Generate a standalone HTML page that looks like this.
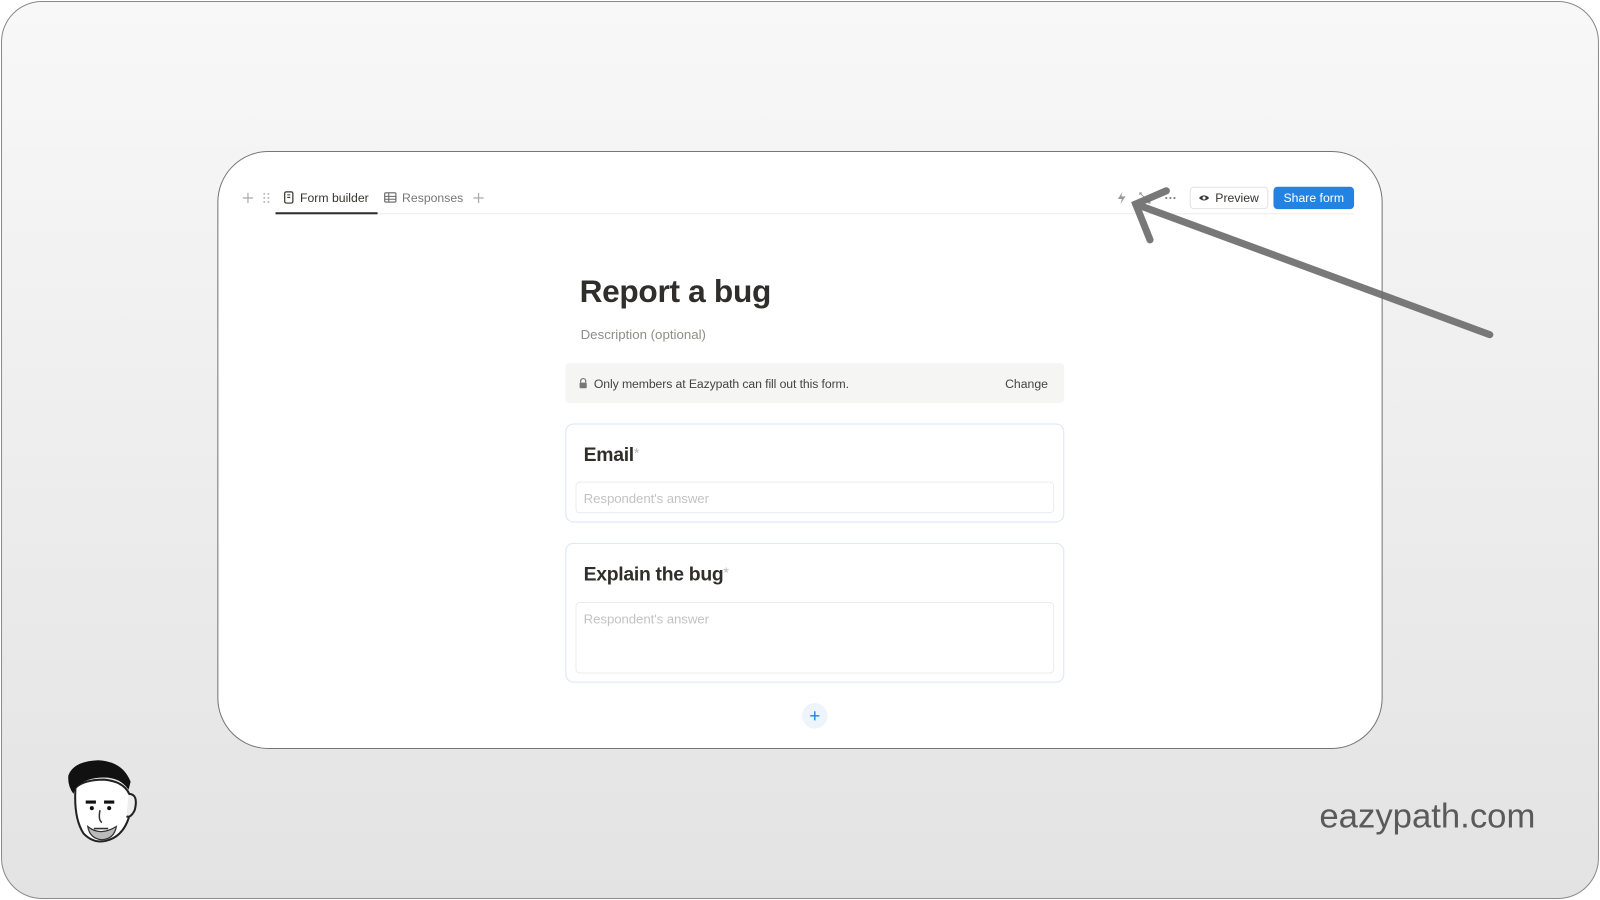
<!DOCTYPE html>
<html><head><meta charset="utf-8"><style>
*{box-sizing:border-box;margin:0;padding:0}
html,body{width:1600px;height:900px;overflow:hidden;background:#fff;font-family:"Liberation Sans",sans-serif}
#s{position:absolute;left:0;top:0;width:1568px;height:882px;transform:scale(1.0204);transform-origin:0 0}
.frame{position:absolute;left:1px;top:1px;width:1566px;height:880px;border:1px solid #8a8a8a;border-radius:40px;background:linear-gradient(#f8f8f8,#e3e3e3)}
.win{position:absolute;left:213px;top:148px;width:1142px;height:586px;background:#fff;border:1px solid #767676;border-radius:50px}
.a{position:absolute;white-space:nowrap}
.tab{font-size:12px;color:#37352f}
.card{position:absolute;left:554px;width:489px;border:1px solid #d9e6f6;border-radius:8px;background:#fff}
.inp{position:absolute;left:9px;right:9px;border:1px solid #ececec;border-radius:4px;font-size:13px;color:#c3c3c3;padding:8px 7px;letter-spacing:-0.1px}
.q{position:absolute;left:17px;font-size:19px;font-weight:bold;color:#2f2e2a;letter-spacing:-0.3px}
.q span{color:#bbb;font-weight:normal;font-size:14px;vertical-align:top}
</style></head><body><div id="s">
<div class="frame"></div>
<div class="win"></div>
<svg class="a" style="left:236px;top:186px" width="240" height="16" viewBox="0 0 240 16">
<path d="M2 8h10M7 3v10" stroke="#aaa" stroke-width="1.2"/>
<g fill="#bbb"><circle cx="23" cy="4" r="1"/><circle cx="27" cy="4" r="1"/><circle cx="23" cy="8" r="1"/><circle cx="27" cy="8" r="1"/><circle cx="23" cy="12" r="1"/><circle cx="27" cy="12" r="1"/></g>
<rect x="43" y="2" width="8" height="11" rx="1.5" fill="none" stroke="#37352f" stroke-width="1.2"/><path d="M45.5 5h3M45.5 7.5h3" stroke="#37352f" stroke-width="1"/>
<rect x="141" y="3" width="11" height="9" rx="1" fill="none" stroke="#666" stroke-width="1.1"/><path d="M141 6.5h11M141 9.3h11M145 3v9" stroke="#666" stroke-width="1"/>
<path d="M228 8h10M233 3v10" stroke="#aaa" stroke-width="1.2"/>
</svg>
<div class="a tab" style="left:294px;top:187px">Form builder</div>
<div class="a tab" style="left:394px;top:187px;color:#777">Responses</div>
<div class="a" style="left:270px;top:209px;width:1057px;height:1px;background:#ececec"></div>
<div class="a" style="left:270px;top:208px;width:100px;height:2px;background:#2f2e2a"></div>
<svg class="a" style="left:1092px;top:186px" width="70" height="16" viewBox="0 0 70 16">
<path d="M8 2L3.5 9h4L6 14l5-7.5H7z" fill="#999"/>
<path d="M27 3l-2 0 0 2M25 3l4 4M33 13l2 0 0-2M35 13l-4-4" stroke="#999" stroke-width="1" fill="none"/>
<g fill="#888"><circle cx="51" cy="8" r="1.1"/><circle cx="55" cy="8" r="1.1"/><circle cx="59" cy="8" r="1.1"/></g>
</svg>
<div class="a" style="left:1166px;top:183px;width:77px;height:22px;border:1px solid #e2e2e2;border-radius:4px;font-size:12px;color:#37352f;line-height:20px;padding-left:24px">Preview</div>
<svg class="a" style="left:1174px;top:189px" width="12" height="10"><path d="M1 5Q6 0 11 5Q6 10 1 5z" fill="#37352f"/><circle cx="6" cy="5" r="1.5" fill="#fff"/></svg>
<div class="a" style="left:1248px;top:183px;width:79px;height:22px;background:#2383e2;border-radius:4px;font-size:12px;color:#fff;line-height:22px;text-align:center">Share form</div>
<div class="a" style="left:568px;top:268px;font-size:31px;font-weight:bold;color:#2f2e2a;letter-spacing:-0.3px">Report a bug</div>
<div class="a" style="left:569px;top:320px;font-size:13px;color:#8f8e8a">Description (optional)</div>
<div class="a" style="left:554px;top:356px;width:489px;height:39px;background:#f5f5f4;border-radius:4px"></div>
<svg class="a" style="left:567px;top:370px" width="9" height="11"><path d="M2 5V3.5a2.5 2.5 0 0 1 5 0V5" stroke="#777" stroke-width="1.2" fill="none"/><rect x="1" y="5" width="7" height="5.5" rx="1" fill="#777"/></svg>
<div class="a" style="left:582px;top:369px;font-size:12px;color:#45443f;letter-spacing:-0.1px">Only members at Eazypath can fill out this form.</div>
<div class="a" style="left:985px;top:369px;font-size:12px;color:#45443f">Change</div>
<div class="card" style="top:415px;height:97px"><div class="q" style="top:20px">Email<span>*</span></div><div class="inp" style="top:56px;height:31px">Respondent's answer</div></div>
<div class="card" style="top:532px;height:137px"><div class="q" style="top:20px">Explain the bug<span>*</span></div><div class="inp" style="top:57px;height:70px">Respondent's answer</div></div>
<div class="a" style="left:786px;top:689px;width:25px;height:25px;border-radius:50%;background:#eef4fc"></div>
<svg class="a" style="left:792px;top:695px" width="13" height="13"><path d="M6.5 2v9M2 6.5h9" stroke="#2383e2" stroke-width="1.4"/></svg>
<svg class="a" style="left:0;top:0" width="1568" height="882"><g stroke="#6a6a6a" stroke-width="7" stroke-linecap="round" fill="none" opacity=".9"><path d="M1460 328L1113 200"/><path d="M1143 187L1113 200L1127 235"/></g></svg>
<svg class="a" style="left:62px;top:742px" width="76" height="86" viewBox="0 0 76 86">
<path d="M12 30Q10 60 20 75Q30 85 42 82Q58 78 64 60L66 40Q62 24 40 22Q20 22 12 30z" fill="#fff" stroke="#222" stroke-width="2"/>
<path d="M5 18Q10 4 34 3Q58 4 66 24L64 32Q56 20 40 20Q22 20 12 30L10 36Q4 28 5 18z" fill="#111"/>
<path d="M64 36Q74 36 70 52Q66 60 62 58" fill="#eee" stroke="#222" stroke-width="2"/>
<path d="M22 44h10M40 44h10" stroke="#111" stroke-width="3"/>
<circle cx="28" cy="50" r="2" fill="#111"/><circle cx="45" cy="50" r="2" fill="#111"/>
<path d="M36 52Q34 62 38 64" stroke="#333" stroke-width="1.5" fill="none"/>
<path d="M24 68Q36 78 52 68Q50 80 38 81Q26 80 24 68z" fill="#bbb" stroke="#333" stroke-width="1.2"/>
<path d="M30 70h14" stroke="#333" stroke-width="1.5"/>
</svg>
<div class="a" style="left:1293px;top:781px;font-size:34px;color:#5a5a5a">eazypath.com</div>
</div></body></html>
